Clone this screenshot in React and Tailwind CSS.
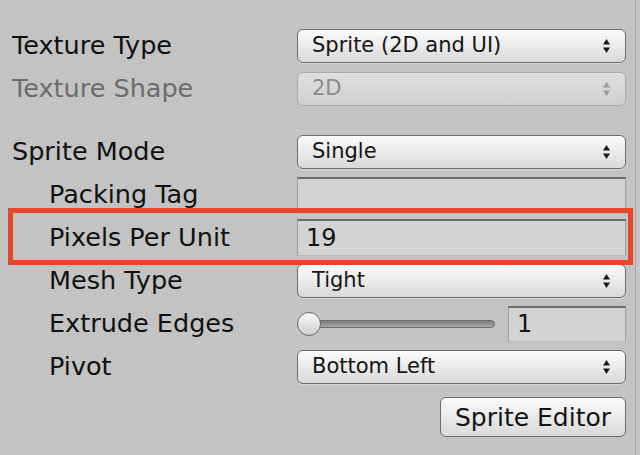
import React from 'react';

const font = { fontFamily: '"DejaVu Sans", "Liberation Sans", sans-serif' };

function Arrows({ disabled }) {
  const c = disabled ? '#9a9a9a' : '#1a1a1a';
  return (
    <svg width="9" height="16" viewBox="0 0 9 16" className="shrink-0">
      <path d="M4.5 1 L8 6.5 L1 6.5 Z" fill={c} />
      <path d="M4.5 15 L8 9.5 L1 9.5 Z" fill={c} />
    </svg>
  );
}

function Dropdown({ value, disabled }) {
  return (
    <div
      className={
        'flex h-[34px] w-[329px] items-center justify-between rounded-[6px] border-[1.5px] pl-[14px] pr-[14px] text-[21px] ' +
        (disabled
          ? 'border-[#a9a9a9] bg-gradient-to-b from-[#dedede] to-[#d0d0d0] text-[#8c8c8c]'
          : 'border-[#6d6d6d] bg-gradient-to-b from-[#fbfbfb] to-[#d9d9d9] text-[#141414] shadow-[0_1px_0_#d6d6d6]')
      }
    >
      <span className="leading-none">{value}</span>
      <Arrows disabled={disabled} />
    </div>
  );
}

function Field({ value, className }) {
  return (
    <div
      className={
        'flex items-center border border-[#9d9d9d] border-t-2 border-t-[#6b6b6b] border-b-[#b9b9b9] bg-[#d3d3d3] pl-[8px] text-[24px] text-[#141414] ' +
        className
      }
    >
      <span className="leading-none">{value}</span>
    </div>
  );
}

function Row({ label, indent, dim, children }) {
  return (
    <div className="flex h-[43px] items-center">
      <div
        className={
          'w-[285px] text-[25.5px] leading-none ' +
          (indent ? 'pl-[37px] ' : '') +
          (dim ? 'text-[#6c6c6c]' : 'text-[#111111]')
        }
      >
        {label}
      </div>
      {children}
    </div>
  );
}

export default function App() {
  return (
    <div style={font} className="flex h-[455px] w-[640px] overflow-hidden bg-[#c3c3c3]">
      <div className="flex w-[635px] flex-col pl-[12px] pt-[24px]">
        <Row label="Texture Type">
          <Dropdown value="Sprite (2D and UI)" />
        </Row>
        <Row label="Texture Shape" dim>
          <Dropdown value="2D" disabled />
        </Row>
        <div className="h-[20px]" />
        <Row label="Sprite Mode">
          <Dropdown value="Single" />
        </Row>
        <Row label="Packing Tag" indent>
          <Field value="" className="mt-[2px] h-[37px] w-[329px] bg-[#cfcfcf]" />
        </Row>
        <div className="relative">
          <Row label="Pixels Per Unit" indent>
            <Field value="19" className="h-[37px] w-[329px]" />
          </Row>
          <div className="pointer-events-none absolute left-[-4px] top-[-8px] h-[57px] w-[625px] border-[5px] border-[#e8462b]" />
        </div>
        <Row label="Mesh Type" indent>
          <Dropdown value="Tight" />
        </Row>
        <Row label="Extrude Edges" indent>
          <div className="flex w-[329px] items-center">
            <div className="relative flex h-[26px] w-[199px] items-center">
              <div className="ml-[6px] h-[8px] w-[192px] rounded-full border border-[#6c6c6c] bg-gradient-to-b from-[#7b7b7b] to-[#a9a9a9]" />
              <div className="absolute left-0 top-[1px] h-[24px] w-[24px] rounded-full border-[1.5px] border-[#6a6a6a] bg-gradient-to-b from-[#fafafa] to-[#cfcfcf]" />
            </div>
            <Field value="1" className="ml-[12px] h-[36px] w-[118px]" />
          </div>
        </Row>
        <Row label="Pivot" indent>
          <Dropdown value="Bottom Left" />
        </Row>
        <div className="mt-[9px] flex w-[614px] justify-end">
          <div className="flex h-[40px] w-[186px] items-center justify-center rounded-[6px] border-[1.5px] border-[#6d6d6d] bg-gradient-to-b from-[#fbfbfb] to-[#d9d9d9] text-[25px] leading-none text-[#141414]">
            Sprite Editor
          </div>
        </div>
      </div>
      <div className="h-full w-[5px] border-l border-[#a6a6a6] bg-[#c6c6c6]" />
    </div>
  );
}
